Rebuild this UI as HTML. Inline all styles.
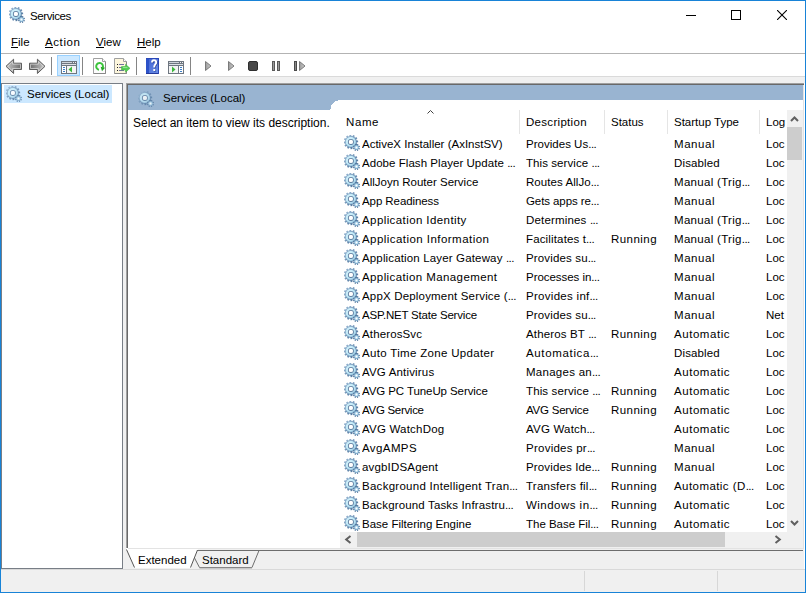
<!DOCTYPE html>
<html><head><meta charset="utf-8">
<style>
*{margin:0;padding:0;box-sizing:border-box}
html,body{width:806px;height:593px;overflow:hidden;background:#fff}
body{position:relative;font-family:"Liberation Sans",sans-serif;font-size:11.5px;color:#000}
.el{letter-spacing:-0.5px;font-style:normal}
.a{position:absolute}
.t{position:absolute;white-space:nowrap;line-height:14px}
.row{position:absolute;left:0;width:447px;height:19px}
.row span{position:absolute;top:3px;line-height:14px;white-space:nowrap}
.row .ic{position:absolute}
.sep{position:absolute;width:1px;background:#a0a0a0}

</style></head><body>
<svg width="0" height="0" style="position:absolute">
<defs>
<radialGradient id="gr" cx="0.45" cy="0.45" r="0.6">
<stop offset="0" stop-color="#ffffff"/><stop offset="0.5" stop-color="#bfe6f6"/><stop offset="1" stop-color="#5f8ab3"/></radialGradient>
<linearGradient id="gt" x1="0" y1="0" x2="1" y2="1"><stop offset="0" stop-color="#a4c2dc"/><stop offset="1" stop-color="#3d6590"/></linearGradient>
<radialGradient id="gr2" cx="0.4" cy="0.4" r="0.7"><stop offset="0" stop-color="#e0f6fd"/><stop offset="0.6" stop-color="#bfe8f7"/><stop offset="1" stop-color="#86b4d4"/></radialGradient>
<g id="gear">
<path fill="url(#gt)" d="M5.44 1.18L5.39 -0.24L7.18 -0.39L7.37 1.02L8.49 1.22L9.17 -0.04L10.79 0.72L10.25 2.04L11.12 2.78L12.33 2.02L13.36 3.49L12.23 4.37L12.62 5.44L14.04 5.39L14.19 7.18L12.78 7.37L12.58 8.49L13.84 9.17L13.08 10.79L11.76 10.25L11.02 11.12L11.78 12.33L10.31 13.36L9.43 12.23L8.36 12.62L8.41 14.04L6.62 14.19L6.43 12.78L5.31 12.58L4.63 13.84L3.01 13.08L3.55 11.76L2.68 11.02L1.47 11.78L0.44 10.31L1.57 9.43L1.18 8.36L-0.24 8.41L-0.39 6.62L1.02 6.43L1.22 5.31L-0.04 4.63L0.72 3.01L2.04 3.55L2.78 2.68L2.02 1.47L3.49 0.44L4.37 1.57Z"/>
<circle cx="6.9" cy="6.9" r="5.2" fill="url(#gr2)"/>
<circle cx="6.9" cy="6.9" r="3.0" fill="#58799c"/>
<circle cx="6.9" cy="6.9" r="2.2" fill="#fff"/>
<path fill="#52779e" d="M15.05 13.02L15.98 13.44L15.49 14.51L14.56 14.08L13.94 14.67L14.30 15.62L13.19 16.03L12.84 15.08L11.98 15.05L11.56 15.98L10.49 15.49L10.92 14.56L10.33 13.94L9.38 14.30L8.97 13.19L9.92 12.84L9.95 11.98L9.02 11.56L9.51 10.49L10.44 10.92L11.06 10.33L10.70 9.38L11.81 8.97L12.16 9.92L13.02 9.95L13.44 9.02L14.51 9.51L14.08 10.44L14.67 11.06L15.62 10.70L16.03 11.81L15.08 12.16Z"/>
<circle cx="12.5" cy="12.5" r="2.3" fill="#a9d2ea"/>
<circle cx="12.5" cy="12.5" r="1" fill="#fff"/>
</g>
</defs></svg>

<!-- window border -->
<div class="a" style="left:0;top:0;width:806px;height:593px;border:1px solid #1883d7"></div>

<!-- title bar -->
<svg class="a" style="left:9px;top:7px" width="16" height="16"><use href="#gear"/></svg>
<div class="t" style="left:30px;top:9px;letter-spacing:-0.4px">Services</div>
<!-- caption buttons -->
<div class="a" style="left:686px;top:15px;width:10px;height:1px;background:#000"></div>
<div class="a" style="left:731px;top:10px;width:10px;height:10px;border:1px solid #000"></div>
<svg class="a" style="left:777px;top:10px" width="10" height="10"><path d="M0 0L10 10M10 0L0 10" stroke="#000" stroke-width="1.1"/></svg>

<!-- menu -->
<div class="t" style="left:11px;top:35px">File</div><div class="a" style="left:11px;top:47px;width:7px;height:1px;background:#000"></div>
<div class="t" style="left:45px;top:35px;letter-spacing:0.6px">Action</div><div class="a" style="left:45px;top:47px;width:8px;height:1px;background:#000"></div>
<div class="t" style="left:96px;top:35px">View</div><div class="a" style="left:96px;top:47px;width:8px;height:1px;background:#000"></div>
<div class="t" style="left:137px;top:35px">Help</div><div class="a" style="left:137px;top:47px;width:9px;height:1px;background:#000"></div>
<div class="a" style="left:1px;top:53px;width:804px;height:1px;background:#b3b3b3"></div>

<!-- toolbar -->
<svg class="a" style="left:0;top:54px" width="320" height="22">
<defs>
<linearGradient id="ag" x1="0" y1="0" x2="0" y2="1"><stop offset="0" stop-color="#c8c8c8"/><stop offset="0.5" stop-color="#8a8a8a"/><stop offset="1" stop-color="#b0b0b0"/></linearGradient>
<linearGradient id="agb" x1="0" y1="0" x2="1" y2="0"><stop offset="0" stop-color="#c8c8c8"/><stop offset="1" stop-color="#6a6a6a"/></linearGradient>
<linearGradient id="agf" x1="1" y1="0" x2="0" y2="0"><stop offset="0" stop-color="#c8c8c8"/><stop offset="1" stop-color="#6a6a6a"/></linearGradient>
<linearGradient id="pg" x1="0" y1="0" x2="1" y2="0"><stop offset="0" stop-color="#9a9a9a"/><stop offset="1" stop-color="#d0d0d0"/></linearGradient>
<linearGradient id="hb" x1="0" y1="0" x2="1" y2="1"><stop offset="0" stop-color="#3d5fd0"/><stop offset="1" stop-color="#6b8fe8"/></linearGradient>
</defs>
<!-- back arrow: origin y offset 54 -->
<path d="M6 12.3L13.6 5.2V9.2H21.5V15.5H13.6V19.5Z" fill="url(#agb)" stroke="#5e5e5e" stroke-linejoin="round"/>
<path d="M7.7 12.3L12.6 7.6V10.2H20.5V14.5H12.6V17Z" fill="none" stroke="#e6e6e6" stroke-width="0.8" opacity="0.8"/>
<path d="M45 12.3L37.4 5.2V9.2H29.5V15.5H37.4V19.5Z" fill="url(#agf)" stroke="#5e5e5e" stroke-linejoin="round"/>
<path d="M43.3 12.3L38.4 7.6V10.2H30.5V14.5H38.4V17Z" fill="none" stroke="#e6e6e6" stroke-width="0.8" opacity="0.8"/>
<rect x="51" y="3" width="1" height="18" fill="#858585"/>
<!-- highlighted button -->
<rect x="57.5" y="1.5" width="22" height="20" fill="#cce8ff" stroke="#99d1ff"/>
<rect x="61.5" y="7.5" width="15" height="12" fill="#fff" stroke="#6e7680"/>
<rect x="62" y="8" width="14" height="1" fill="#6e7680"/>
<rect x="62" y="8" width="10" height="1" fill="#d0d4da"/>
<rect x="73" y="8" width="1" height="1" fill="#f0f0f0"/>
<rect x="75" y="8" width="1" height="1" fill="#f0f0f0"/>
<rect x="62" y="9" width="14" height="1" fill="#6e7680"/>
<rect x="62" y="10" width="14" height="1" fill="#dcdfe4"/>
<rect x="62" y="11" width="14" height="1" fill="#6e7680"/>
<rect x="66" y="12" width="1" height="7" fill="#6e7680"/>
<rect x="63" y="13" width="2" height="1" fill="#3c7fc8"/>
<rect x="63" y="15" width="2" height="1" fill="#3c7fc8"/>
<rect x="63" y="17" width="2" height="1" fill="#3c7fc8"/>
<rect x="67" y="12" width="9" height="7" fill="#f4f4f4"/>
<path d="M68.5 15.5L72 12.5V18.5Z" fill="#3cb83c"/>
<rect x="82" y="3" width="1" height="18" fill="#858585"/>
<!-- refresh doc -->
<path d="M93.5 4.5H102.5L105.5 7.5V19.5H93.5Z" fill="#fdfdfd" stroke="#a0a0a0"/>
<path d="M93.5 19.5H105.5V7.5" fill="none" stroke="#888"/>
<path d="M102.5 4.5V7.5H105.5" fill="#fff" stroke="#a0a0a0"/>
<path d="M99 15.75A3.4 3.4 0 1 1 102.8 13.56" fill="none" stroke="#3cc43c" stroke-width="2"/>
<path d="M100.6 12.8L105 13.8L102 17.2Z" fill="#22aa22"/>
<!-- export list -->
<path d="M114.5 4.5H123.5L126.5 7.5V19.5H114.5Z" fill="#fdf6dc" stroke="#a0a0a0"/>
<path d="M114.5 19.5H126.5V7.5" fill="none" stroke="#888"/>
<path d="M123.5 4.5V7.5H126.5" fill="#fff" stroke="#a0a0a0"/>
<rect x="117" y="10" width="1" height="1" fill="#202020"/>
<rect x="117" y="13" width="1" height="1" fill="#202020"/>
<rect x="117" y="16" width="1" height="1" fill="#202020"/>
<rect x="119" y="10" width="5" height="1" fill="#7070a0"/>
<rect x="119" y="13" width="5" height="1" fill="#7070a0"/>
<rect x="119" y="16" width="5" height="1" fill="#7070a0"/>
<path d="M121.5 12.5H125.5V10.3L130 14.3L125.5 18.3V16H121.5Z" fill="#52cc52" stroke="#3cb03c" stroke-width="0.5"/>
<path d="M123 13.6H127.5" stroke="#a8eca8" stroke-width="0.8"/>
<rect x="136" y="3" width="1" height="18" fill="#858585"/>
<!-- help book -->
<rect x="146" y="4" width="13" height="16" fill="url(#hb)"/>
<rect x="146" y="4" width="3" height="16" fill="#2c52c8"/>
<rect x="146" y="4" width="13" height="1" fill="#2a48b8"/>
<rect x="146" y="19" width="13" height="1" fill="#23389a"/>
<rect x="158" y="4" width="1" height="16" fill="#2a48b8"/>
<path d="M152 8.6C152 6.8 153.2 6.2 154 6.2C155.2 6.2 156.2 7 156.2 8.4C156.2 10.2 154.3 10.6 154.3 12.5V13.6" fill="none" stroke="#243c90" stroke-width="1.9" transform="translate(0.6,0.6)"/>
<rect x="153.9" y="15.5" width="2" height="2" fill="#243c90"/>
<path d="M152 8.6C152 6.8 153.2 6.2 154 6.2C155.2 6.2 156.2 7 156.2 8.4C156.2 10.2 154.3 10.6 154.3 12.5V13.6" fill="none" stroke="#fff" stroke-width="1.9"/>
<rect x="153.3" y="15" width="2" height="2" fill="#fff"/>
<!-- action pane -->
<rect x="168.5" y="7.5" width="15" height="12" fill="#fff" stroke="#6e7680"/>
<rect x="169" y="8" width="14" height="1" fill="#6e7680"/>
<rect x="169" y="8" width="10" height="1" fill="#d0d4da"/>
<rect x="180" y="8" width="1" height="1" fill="#f0f0f0"/>
<rect x="182" y="8" width="1" height="1" fill="#f0f0f0"/>
<rect x="169" y="9" width="14" height="1" fill="#6e7680"/>
<rect x="169" y="10" width="14" height="1" fill="#dcdfe4"/>
<rect x="169" y="11" width="14" height="1" fill="#6e7680"/>
<rect x="178" y="12" width="1" height="7" fill="#6e7680"/>
<rect x="180" y="13" width="2" height="1" fill="#3c7fc8"/>
<rect x="180" y="15" width="2" height="1" fill="#3c7fc8"/>
<rect x="180" y="17" width="2" height="1" fill="#3c7fc8"/>
<rect x="169" y="12" width="9" height="7" fill="#f4f4f4"/>
<path d="M172 12.5L175.5 15.5L172 18.5Z" fill="#3cb83c"/>
<rect x="190" y="3" width="1" height="18" fill="#858585"/>
<!-- play -->
<path d="M205.5 7.5L211 12L205.5 16.5Z" fill="url(#pg)" stroke="#7a7a7a" stroke-linejoin="round"/>
<path d="M228.5 7.5L234 12L228.5 16.5Z" fill="url(#pg)" stroke="#7a7a7a" stroke-linejoin="round"/>
<!-- stop -->
<rect x="248.5" y="7.5" width="9" height="9" rx="1.5" fill="#484848" stroke="#2e2e2e"/>
<!-- pause -->
<rect x="272.5" y="7.5" width="2" height="9" fill="#9a9a9a" stroke="#5a5a5a"/>
<rect x="277.5" y="7.5" width="2" height="9" fill="#9a9a9a" stroke="#5a5a5a"/>
<!-- restart -->
<rect x="294.5" y="7.5" width="2" height="9" fill="#8a8a8a" stroke="#4a4a4a"/>
<path d="M299.5 7.5L305 12L299.5 16.5Z" fill="url(#pg)" stroke="#7a7a7a" stroke-linejoin="round"/>
</svg>


<!-- gray band -->
<div class="a" style="left:1px;top:76px;width:804px;height:7px;background:#f0f0f0;border-top:1px solid #dadada"></div>
<!-- gap between panes -->
<div class="a" style="left:123px;top:83px;width:3px;height:486px;background:#f0f0f0"></div>

<!-- left pane -->
<div class="a" style="left:1px;top:83px;width:122px;height:486px;border:1px solid #787e86;background:#fff"></div>
<div class="a" style="left:4px;top:85px;width:108px;height:18px;background:#cce8ff"></div>
<svg class="a" style="left:6px;top:86px;opacity:.85" width="16" height="16"><use href="#gear"/></svg>
<div class="t" style="left:27px;top:87px">Services (Local)</div>

<!-- right pane -->
<div class="a" style="left:126px;top:83px;width:678px;height:465px;border-left:1px solid #a0a0a0;border-top:1px solid #a0a0a0;background:#fff"></div>
<div class="a" style="left:127px;top:84px;width:677px;height:464px;border-left:1px solid #696969;border-top:1px solid #696969;background:#fff"></div>
<div class="a" style="left:128px;top:85px;width:675px;height:25px;background:#99b4d1"></div>
<svg class="a" style="left:138px;top:91px;opacity:.8" width="16" height="16"><use href="#gear"/></svg>
<div class="t" style="left:163px;top:91px">Services (Local)</div>
<div class="a" style="left:330px;top:100px;width:473px;height:10px;background:#fff;clip-path:polygon(8px 0,100% 0,100% 100%,0 100%,0 9px,1px 9px,1px 5px,2px 5px,2px 4px,3px 4px,3px 3px,4px 3px,4px 2px,5px 2px,5px 1px,8px 1px)"></div>
<div class="t" style="left:133px;top:116px;font-size:12px">Select an item to view its description.</div>

<!-- list -->
<div class="a" style="left:340px;top:110px;width:447px;height:422px;overflow:hidden">
  <div class="t" style="left:6px;top:5px;letter-spacing:0.6px">Name</div>
  <div class="t" style="left:186px;top:5px;letter-spacing:0.3px">Description</div>
  <div class="t" style="left:271px;top:5px">Status</div>
  <div class="t" style="left:334px;top:5px">Startup Type</div>
  <div class="t" style="left:426px;top:5px">Log On As</div>
  <div class="sep" style="left:179px;top:0;height:24px;background:#e5e5e5"></div>
  <div class="sep" style="left:264px;top:0;height:24px;background:#e5e5e5"></div>
  <div class="sep" style="left:327px;top:0;height:24px;background:#e5e5e5"></div>
  <div class="sep" style="left:419px;top:0;height:24px;background:#e5e5e5"></div>
  <svg class="a" style="left:87px;top:0" width="8" height="5"><path d="M0.5 3.5L3.5 0.5L6.5 3.5" fill="none" stroke="#404040"/></svg>
  <div style="position:absolute;left:0;top:-110px">
<div class="row" style="top:134px"><svg class="ic" style="left:4px;top:1px" width="16" height="16"><use href="#gear"/></svg><span style="left:22px;width:157px;overflow:hidden;letter-spacing:0.00px">ActiveX Installer (AxInstSV)</span><span style="left:186px;letter-spacing:0.02px">Provides Us<i class="el">...</i></span><span style="left:271px;letter-spacing:0.45px"></span><span style="left:334px;letter-spacing:0.55px">Manual</span><span style="left:426px">Loc</span></div>
<div class="row" style="top:153px"><svg class="ic" style="left:4px;top:1px" width="16" height="16"><use href="#gear"/></svg><span style="left:22px;width:157px;overflow:hidden;letter-spacing:0.05px">Adobe Flash Player Update <i class="el">...</i></span><span style="left:186px;letter-spacing:0.07px">This service <i class="el">...</i></span><span style="left:271px;letter-spacing:0.45px"></span><span style="left:334px;letter-spacing:0.14px">Disabled</span><span style="left:426px">Loc</span></div>
<div class="row" style="top:172px"><svg class="ic" style="left:4px;top:1px" width="16" height="16"><use href="#gear"/></svg><span style="left:22px;width:157px;overflow:hidden;letter-spacing:0.00px">AllJoyn Router Service</span><span style="left:186px;letter-spacing:0.07px">Routes AllJo<i class="el">...</i></span><span style="left:271px;letter-spacing:0.45px"></span><span style="left:334px;letter-spacing:0.3px">Manual (Trig<i class="el">...</i></span><span style="left:426px">Loc</span></div>
<div class="row" style="top:191px"><svg class="ic" style="left:4px;top:1px" width="16" height="16"><use href="#gear"/></svg><span style="left:22px;width:157px;overflow:hidden;letter-spacing:-0.08px">App Readiness</span><span style="left:186px;letter-spacing:-0.09px">Gets apps re<i class="el">...</i></span><span style="left:271px;letter-spacing:0.45px"></span><span style="left:334px;letter-spacing:0.55px">Manual</span><span style="left:426px">Loc</span></div>
<div class="row" style="top:210px"><svg class="ic" style="left:4px;top:1px" width="16" height="16"><use href="#gear"/></svg><span style="left:22px;width:157px;overflow:hidden;letter-spacing:0.41px">Application Identity</span><span style="left:186px;letter-spacing:0.17px">Determines <i class="el">...</i></span><span style="left:271px;letter-spacing:0.45px"></span><span style="left:334px;letter-spacing:0.3px">Manual (Trig<i class="el">...</i></span><span style="left:426px">Loc</span></div>
<div class="row" style="top:229px"><svg class="ic" style="left:4px;top:1px" width="16" height="16"><use href="#gear"/></svg><span style="left:22px;width:157px;overflow:hidden;letter-spacing:0.45px">Application Information</span><span style="left:186px;letter-spacing:0.15px">Facilitates t<i class="el">...</i></span><span style="left:271px;letter-spacing:0.45px">Running</span><span style="left:334px;letter-spacing:0.3px">Manual (Trig<i class="el">...</i></span><span style="left:426px">Loc</span></div>
<div class="row" style="top:248px"><svg class="ic" style="left:4px;top:1px" width="16" height="16"><use href="#gear"/></svg><span style="left:22px;width:157px;overflow:hidden;letter-spacing:0.15px">Application Layer Gateway <i class="el">...</i></span><span style="left:186px;letter-spacing:0.15px">Provides su<i class="el">...</i></span><span style="left:271px;letter-spacing:0.45px"></span><span style="left:334px;letter-spacing:0.55px">Manual</span><span style="left:426px">Loc</span></div>
<div class="row" style="top:267px"><svg class="ic" style="left:4px;top:1px" width="16" height="16"><use href="#gear"/></svg><span style="left:22px;width:157px;overflow:hidden;letter-spacing:0.40px">Application Management</span><span style="left:186px;letter-spacing:-0.04px">Processes in<i class="el">...</i></span><span style="left:271px;letter-spacing:0.45px"></span><span style="left:334px;letter-spacing:0.55px">Manual</span><span style="left:426px">Loc</span></div>
<div class="row" style="top:286px"><svg class="ic" style="left:4px;top:1px" width="16" height="16"><use href="#gear"/></svg><span style="left:22px;width:157px;overflow:hidden;letter-spacing:0.18px">AppX Deployment Service (<i class="el">...</i></span><span style="left:186px;letter-spacing:0.29px">Provides inf<i class="el">...</i></span><span style="left:271px;letter-spacing:0.45px"></span><span style="left:334px;letter-spacing:0.55px">Manual</span><span style="left:426px">Loc</span></div>
<div class="row" style="top:305px"><svg class="ic" style="left:4px;top:1px" width="16" height="16"><use href="#gear"/></svg><span style="left:22px;width:157px;overflow:hidden;letter-spacing:-0.20px">ASP.NET State Service</span><span style="left:186px;letter-spacing:0.15px">Provides su<i class="el">...</i></span><span style="left:271px;letter-spacing:0.45px"></span><span style="left:334px;letter-spacing:0.55px">Manual</span><span style="left:426px">Net</span></div>
<div class="row" style="top:324px"><svg class="ic" style="left:4px;top:1px" width="16" height="16"><use href="#gear"/></svg><span style="left:22px;width:157px;overflow:hidden;letter-spacing:0.13px">AtherosSvc</span><span style="left:186px;letter-spacing:0.15px">Atheros BT <i class="el">...</i></span><span style="left:271px;letter-spacing:0.45px">Running</span><span style="left:334px;letter-spacing:0.55px">Automatic</span><span style="left:426px">Loc</span></div>
<div class="row" style="top:343px"><svg class="ic" style="left:4px;top:1px" width="16" height="16"><use href="#gear"/></svg><span style="left:22px;width:157px;overflow:hidden;letter-spacing:0.32px">Auto Time Zone Updater</span><span style="left:186px;letter-spacing:0.65px">Automatica<i class="el">...</i></span><span style="left:271px;letter-spacing:0.45px"></span><span style="left:334px;letter-spacing:0.14px">Disabled</span><span style="left:426px">Loc</span></div>
<div class="row" style="top:362px"><svg class="ic" style="left:4px;top:1px" width="16" height="16"><use href="#gear"/></svg><span style="left:22px;width:157px;overflow:hidden;letter-spacing:0.17px">AVG Antivirus</span><span style="left:186px;letter-spacing:0.27px">Manages an<i class="el">...</i></span><span style="left:271px;letter-spacing:0.45px"></span><span style="left:334px;letter-spacing:0.55px">Automatic</span><span style="left:426px">Loc</span></div>
<div class="row" style="top:381px"><svg class="ic" style="left:4px;top:1px" width="16" height="16"><use href="#gear"/></svg><span style="left:22px;width:157px;overflow:hidden;letter-spacing:-0.09px">AVG PC TuneUp Service</span><span style="left:186px;letter-spacing:0.13px">This service <i class="el">...</i></span><span style="left:271px;letter-spacing:0.45px">Running</span><span style="left:334px;letter-spacing:0.55px">Automatic</span><span style="left:426px">Loc</span></div>
<div class="row" style="top:400px"><svg class="ic" style="left:4px;top:1px" width="16" height="16"><use href="#gear"/></svg><span style="left:22px;width:157px;overflow:hidden;letter-spacing:-0.30px">AVG Service</span><span style="left:186px;letter-spacing:-0.22px">AVG Service</span><span style="left:271px;letter-spacing:0.45px">Running</span><span style="left:334px;letter-spacing:0.55px">Automatic</span><span style="left:426px">Loc</span></div>
<div class="row" style="top:419px"><svg class="ic" style="left:4px;top:1px" width="16" height="16"><use href="#gear"/></svg><span style="left:22px;width:157px;overflow:hidden;letter-spacing:0.21px">AVG WatchDog</span><span style="left:186px;letter-spacing:0.20px">AVG Watch<i class="el">...</i></span><span style="left:271px;letter-spacing:0.45px"></span><span style="left:334px;letter-spacing:0.55px">Automatic</span><span style="left:426px">Loc</span></div>
<div class="row" style="top:438px"><svg class="ic" style="left:4px;top:1px" width="16" height="16"><use href="#gear"/></svg><span style="left:22px;width:157px;overflow:hidden;letter-spacing:0.40px">AvgAMPS</span><span style="left:186px;letter-spacing:0.25px">Provides pr<i class="el">...</i></span><span style="left:271px;letter-spacing:0.45px"></span><span style="left:334px;letter-spacing:0.55px">Manual</span><span style="left:426px">Loc</span></div>
<div class="row" style="top:457px"><svg class="ic" style="left:4px;top:1px" width="16" height="16"><use href="#gear"/></svg><span style="left:22px;width:157px;overflow:hidden;letter-spacing:0.17px">avgbIDSAgent</span><span style="left:186px;letter-spacing:0.14px">Provides Ide<i class="el">...</i></span><span style="left:271px;letter-spacing:0.45px">Running</span><span style="left:334px;letter-spacing:0.55px">Manual</span><span style="left:426px">Loc</span></div>
<div class="row" style="top:476px"><svg class="ic" style="left:4px;top:1px" width="16" height="16"><use href="#gear"/></svg><span style="left:22px;width:157px;overflow:hidden;letter-spacing:0.27px">Background Intelligent Tran<i class="el">...</i></span><span style="left:186px;letter-spacing:0.23px">Transfers fil<i class="el">...</i></span><span style="left:271px;letter-spacing:0.45px">Running</span><span style="left:334px;letter-spacing:0.43px">Automatic (D<i class="el">...</i></span><span style="left:426px">Loc</span></div>
<div class="row" style="top:495px"><svg class="ic" style="left:4px;top:1px" width="16" height="16"><use href="#gear"/></svg><span style="left:22px;width:157px;overflow:hidden;letter-spacing:0.15px">Background Tasks Infrastru<i class="el">...</i></span><span style="left:186px;letter-spacing:0.47px">Windows in<i class="el">...</i></span><span style="left:271px;letter-spacing:0.45px">Running</span><span style="left:334px;letter-spacing:0.55px">Automatic</span><span style="left:426px">Loc</span></div>
<div class="row" style="top:514px"><svg class="ic" style="left:4px;top:1px" width="16" height="16"><use href="#gear"/></svg><span style="left:22px;width:157px;overflow:hidden;letter-spacing:0.00px">Base Filtering Engine</span><span style="left:186px;letter-spacing:-0.02px">The Base Fil<i class="el">...</i></span><span style="left:271px;letter-spacing:0.45px">Running</span><span style="left:334px;letter-spacing:0.55px">Automatic</span><span style="left:426px">Loc</span></div>
  </div>
</div>

<!-- vertical scrollbar -->
<div class="a" style="left:787px;top:110px;width:16px;height:438px;background:#f0f0f0"></div>
<div class="a" style="left:787px;top:127px;width:15px;height:33px;background:#cdcdcd"></div>
<div class="a" style="left:803px;top:85px;width:1px;height:484px;background:#e3e3e3"></div>
<svg class="a" style="left:790px;top:115px" width="9" height="8"><path d="M1 6L4.5 2.5L8 6" fill="none" stroke="#606060" stroke-width="2"/></svg>
<svg class="a" style="left:790px;top:519px" width="9" height="8"><path d="M1 2L4.5 5.5L8 2" fill="none" stroke="#606060" stroke-width="2"/></svg>
<!-- horizontal scrollbar -->
<div class="a" style="left:340px;top:532px;width:463px;height:16px;background:#f0f0f0"></div>
<div class="a" style="left:357px;top:532px;width:368px;height:15px;background:#cdcdcd"></div>
<svg class="a" style="left:344px;top:535px" width="8" height="9"><path d="M6.5 1L2.2 4.5L6.5 8" fill="none" stroke="#606060" stroke-width="2"/></svg>
<svg class="a" style="left:774px;top:535px" width="8" height="9"><path d="M1.5 1L5.8 4.5L1.5 8" fill="none" stroke="#606060" stroke-width="2"/></svg>

<!-- tab strip -->
<div class="a" style="left:128px;top:548px;width:675px;height:1px;background:#e3e3e3"></div>
<div class="a" style="left:123px;top:549px;width:681px;height:20px;background:#f0f0f0"></div>
<div class="a" style="left:197px;top:550px;width:606px;height:1px;background:#6d6d6d"></div>
<svg class="a" style="left:120px;top:544px" width="150" height="26">
<path d="M6 5H78L70.5 24H14.5Z" fill="#fff"/>
<path d="M6.5 5.5L14.5 23.5M77.5 6L70.5 23.5" stroke="#555" stroke-width="1" fill="none"/>
<path d="M74.5 14L79.5 23.5H132L139 6.5" stroke="#6d6d6d" stroke-width="1" fill="none"/>
<path d="M79.5 24H132" stroke="#a0a0a0" stroke-width="1"/>
</svg>
<div class="t" style="left:138px;top:553px">Extended</div>
<div class="t" style="left:202px;top:553px">Standard</div>

<!-- status bar -->
<div class="a" style="left:1px;top:569px;width:804px;height:1px;background:#d9d9d9"></div>
<div class="a" style="left:1px;top:570px;width:804px;height:22px;background:#f0f0f0"></div>
<div class="a" style="left:584px;top:571px;width:1px;height:20px;background:#d7d7d7"></div>
<div class="a" style="left:717px;top:571px;width:1px;height:20px;background:#d7d7d7"></div>
</body></html>
